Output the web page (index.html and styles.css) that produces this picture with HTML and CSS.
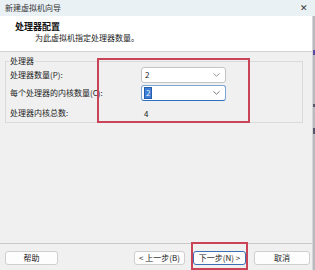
FILE: index.html
```html
<!DOCTYPE html>
<html lang="zh">
<head>
<meta charset="utf-8">
<title>新建虚拟机向导</title>
<link rel="stylesheet" href="styles.css">
</head>
<body>
<div class="window">
  <div class="titlebar">
    <span class="title">新建虚拟机向导</span>
    <span class="close">✕</span>
  </div>
  <div class="frame">
    <div class="main">
      <div class="header">
        <div class="h-title">处理器配置</div>
        <div class="h-sub">为此虚拟机指定处理器数量。</div>
      </div>
      <div class="content">
        <fieldset class="group">
          <legend>处理器</legend>
          <div class="grid">
            <label class="lbl">处理器数量(P):</label>
            <div class="combo"><span class="val">2</span><svg class="chev" width="7" height="4" viewBox="0 0 7 4"><path d="M0.5 0.5 L3.5 3.2 L6.5 0.5" fill="none" stroke="#8a8a8a" stroke-width="0.9"/></svg></div>
            <label class="lbl">每个处理器的内核数量(C):</label>
            <div class="combo focus"><span class="val sel">2</span><svg class="chev" width="7" height="4" viewBox="0 0 7 4"><path d="M0.5 0.5 L3.5 3.2 L6.5 0.5" fill="none" stroke="#6a6a6a" stroke-width="0.9"/></svg></div>
            <span class="lbl total">处理器内核总数:</span>
            <span class="num total">4</span>
          </div>
        </fieldset>
        <div class="mark mark-top"></div>
      </div>
      <div class="footer">
        <button class="btn help">帮助</button>
        <div class="spacer"></div>
        <button class="btn prev">&lt; 上一步(B)</button>
        <button class="btn next">下一步(N) &gt;</button>
        <button class="btn cancel">取消</button>
        <div class="mark mark-btn"></div>
      </div>
    </div>
    <div class="edge"><span class="tick t1"></span><span class="tick t2"></span><span class="tick t3"></span></div>
  </div>
</div>
</body>
</html>
```

FILE: styles.css
```css
* { box-sizing: border-box; }
html, body { margin: 0; padding: 0; }
body {
  width: 315px;
  height: 270px;
  overflow: hidden;
  font-family: "Noto Sans CJK SC", "Noto Sans", sans-serif;
  font-size: 8px;
  color: #1a1a1a;
  background: #f0f0f0;
}
.window {
  display: flex;
  flex-direction: column;
  height: 270px;
}
.titlebar {
  height: 16px;
  flex: none;
  background: #eaf1f5;
  display: flex;
  align-items: center;
  justify-content: space-between;
  padding: 0 7px 2px 5px;
  font-size: 8px;
  color: #333;
}
.close { font-size: 9px; color: #333; }
.frame {
  flex: 1;
  display: flex;
}
.main {
  flex: 1;
  display: flex;
  flex-direction: column;
  position: relative;
}
.edge {
  width: 3px;
  flex: none;
  background: #b9b9c0;
  border-left: 1px solid #d6d6d6;
  position: relative;
}
.tick { position: absolute; left: 0; width: 2px; background: #55556a; }
.t1 { top: 34px; height: 5px; background: #5a4aa0; }
.t2 { top: 88px; height: 3px; }
.t3 { top: 112px; height: 6px; }
.header {
  height: 36px;
  flex: none;
  background: #fff;
  border-bottom: 1px solid #d2d2d2;
  padding: 5px 0 0 15px;
}
.h-title {
  font-weight: bold;
  font-size: 9px;
  line-height: 12px;
  color: #111;
}
.h-sub {
  padding-left: 20px;
  line-height: 10px;
  color: #222;
}
.content {
  position: relative;
  padding: 4px 9px 0 5px;
}
.group {
  margin: 0;
  padding: 0 4px 3px 4px;
  border: 1px solid #dadada;
  min-width: 0;
}
.group legend {
  padding: 0 1px;
  margin-left: -1px;
  line-height: 10px;
  font-size: 8px;
  color: #222;
}
.grid {
  display: grid;
  grid-template-columns: 131px 85px;
  grid-auto-rows: 16px;
  row-gap: 2px;
  align-items: center;
  padding-top: 1px;
}
.lbl { line-height: 10px; color: #222; white-space: nowrap; }
.combo {
  height: 16px;
  background: #fff;
  border: 1px solid #c4c4c4;
  border-radius: 3px;
  display: flex;
  align-items: center;
  justify-content: space-between;
  padding: 0 5px 0 3px;
}
.combo.focus {
  border-color: #7aa7d8;
  border-bottom: 1px solid #2f6fc0;
}
.val { line-height: 10px; }
.val.sel {
  background: #3d7fd6;
  color: #e6efff;
  padding: 0 1px;
  outline: 1px solid #2a5ea8;
}
.num { padding-left: 3px; }
.total { margin-top: 4px; }
.mark {
  position: absolute;
  border: 2px solid #c94457;
}
.mark-top {
  left: 97px;
  top: 6px;
  width: 153px;
  height: 65px;
}
.footer {
  margin-top: auto;
  height: 27px;
  flex: none;
  border-top: 1px solid #c9c9c9;
  display: flex;
  align-items: flex-start;
  padding: 7px 2px 0 5px;
  gap: 8px;
  position: relative;
}
.spacer { flex: 1; }
.btn {
  font-family: inherit;
  font-size: 8px;
  height: 14px;
  line-height: 10px;
  padding: 0;
  background: #fdfdfd;
  border: 1px solid #cfcfcf;
  border-radius: 3px;
  color: #1a1a1a;
}
.help { width: 53px; }
.prev { width: 51px; }
.next { width: 53px; border-color: #3a6fb5; }
.cancel { width: 56px; }
.mark-btn {
  left: 191px;
  top: -2px;
  width: 57px;
  height: 28px;
}
```
